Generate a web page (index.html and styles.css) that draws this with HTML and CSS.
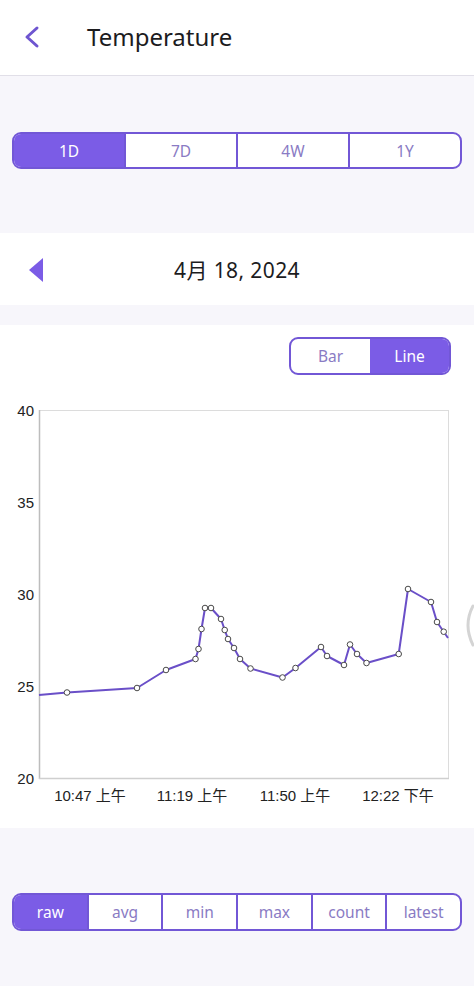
FILE: index.html
```html
<!DOCTYPE html>
<html lang="en">
<head>
  <meta charset="UTF-8">
  <meta name="viewport" content="width=device-width, initial-scale=1.0">
  <title>Temperature</title>
  <link rel="stylesheet" href="styles.css">
</head>

<body>
  <header class="top-bar">
    <button class="back-btn" aria-label="Back">
      <svg width="18" height="24" viewBox="0 0 18 24">
        <path d="M14 3 L4 12 L14 21" fill="none" stroke="#6e55d0" stroke-width="3" stroke-linecap="round" stroke-linejoin="round"/>
      </svg>
    </button>
    <h1>Temperature</h1>
  </header>

  <section class="range-section">
    <div class="segmented range">
      <button class="active">1D</button>
      <button>7D</button>
      <button>4W</button>
      <button>1Y</button>
    </div>
  </section>

  <div class="date-row">
    <button class="prev-btn" aria-label="Previous day">
      <svg width="16" height="26" viewBox="0 0 16 26">
        <path d="M15 1 L15 25 L1 13 Z" fill="#7b5ce6"/>
      </svg>
    </button>
    <div class="date">4月 18, 2024</div>
  </div>

  <section class="chart-card">
    <div class="toggle-row">
      <div class="segmented chart-type">
        <button>Bar</button>
        <button class="active">Line</button>
      </div>
    </div>

    <svg class="chart" width="474" height="453" viewBox="0 375 474 453">
      <line x1="39" y1="410.5" x2="448" y2="410.5" stroke="#dcdcdc" stroke-width="1"/>
      <line x1="448.5" y1="410" x2="448.5" y2="779" stroke="#dcdcdc" stroke-width="1"/>
      <line x1="39.5" y1="410" x2="39.5" y2="779" stroke="#bdbdbd" stroke-width="1.5"/>
      <line x1="39" y1="778.5" x2="449" y2="778.5" stroke="#cfcfcf" stroke-width="1.5"/>

      <g class="y-labels">
        <text x="34" y="416">40</text>
        <text x="34" y="508">35</text>
        <text x="34" y="600">30</text>
        <text x="34" y="692">25</text>
        <text x="34" y="784">20</text>
      </g>

      <g class="x-labels">
        <text x="90" y="801">10:47 上午</text>
        <text x="192" y="801">11:19 上午</text>
        <text x="295" y="801">11:50 上午</text>
        <text x="398" y="801">12:22 下午</text>
      </g>

      <polyline fill="none" stroke="#6a4fc8" stroke-width="2" stroke-linejoin="round"
        points="39,695 67,692.5 137,688 166,670 195.5,659 198.5,649 201.5,629 205,608 211,608 221,619 224.7,630 228,639 234,648 240,659 250.5,668.5 282.5,677.5 295.5,668 321,647 327,656 344,665 350,644.5 357,654 366.5,663 398.7,654 408,589 431,602 437,622 443.7,631.7 448,638"/>

      <g class="dots" fill="#fff" stroke="#4a4a4a" stroke-width="1">
        <circle cx="67" cy="692.5" r="2.8"/>
        <circle cx="137" cy="688" r="2.8"/>
        <circle cx="166" cy="670" r="2.8"/>
        <circle cx="195.5" cy="659" r="2.8"/>
        <circle cx="198.5" cy="649" r="2.8"/>
        <circle cx="201.5" cy="629" r="2.8"/>
        <circle cx="205" cy="608" r="2.8"/>
        <circle cx="211" cy="608" r="2.8"/>
        <circle cx="221" cy="619" r="2.8"/>
        <circle cx="224.7" cy="630" r="2.8"/>
        <circle cx="228" cy="639" r="2.8"/>
        <circle cx="234" cy="648" r="2.8"/>
        <circle cx="240" cy="659" r="2.8"/>
        <circle cx="250.5" cy="668.5" r="2.8"/>
        <circle cx="282.5" cy="677.5" r="2.8"/>
        <circle cx="295.5" cy="668" r="2.8"/>
        <circle cx="321" cy="647" r="2.8"/>
        <circle cx="327" cy="656" r="2.8"/>
        <circle cx="344" cy="665" r="2.8"/>
        <circle cx="350" cy="644.5" r="2.8"/>
        <circle cx="357" cy="654" r="2.8"/>
        <circle cx="366.5" cy="663" r="2.8"/>
        <circle cx="398.7" cy="654" r="2.8"/>
        <circle cx="408" cy="589" r="2.8"/>
        <circle cx="431" cy="602" r="2.8"/>
        <circle cx="437" cy="622" r="2.8"/>
        <circle cx="443.7" cy="631.7" r="2.8"/>
      </g>

      <!-- loading spinner peeking in from the right edge -->
      <path d="M473 606 Q463 625 473 645" fill="none" stroke="#d4d4d4" stroke-width="3" stroke-linecap="round"/>
    </svg>
  </section>

  <section class="agg-section">
    <div class="segmented agg">
      <button class="active">raw</button>
      <button>avg</button>
      <button>min</button>
      <button>max</button>
      <button>count</button>
      <button>latest</button>
    </div>
  </section>
</body>
</html>
```

FILE: styles.css
```css
:root {
  --purple: #7b5ce6;
  --purple-border: #7257d6;
  --purple-text: #8a7bc4;
  --page-bg: #f7f6fb;
  --dark: #1c1c1e;
}

* {
  box-sizing: border-box;
  margin: 0;
  padding: 0;
}

body {
  font-family: 'Noto Sans', 'Noto Sans CJK SC', sans-serif;
  background: var(--page-bg);
  color: var(--dark);
  width: 474px;
  min-height: 986px;
}

button {
  font-family: inherit;
  background: none;
  border: none;
  cursor: pointer;
}

.top-bar {
  height: 76px;
  background: #fff;
  border-bottom: 1px solid #e1dfe8;
  display: flex;
  align-items: center;
  padding-left: 23px;
}

.back-btn {
  display: flex;
  width: 18px;
  height: 24px;
  margin-top: -2px;
}

.top-bar h1 {
  font-size: 24px;
  font-weight: 400;
  margin-left: 46px;
  margin-top: -3px;
}

.range-section {
  padding: 56px 12px 64px;
}

.segmented {
  display: flex;
  border: 2px solid var(--purple-border);
  border-radius: 9px;
  overflow: hidden;
  background: #fff;
}

.segmented button {
  flex: 1;
  color: var(--purple-text);
  font-size: 15.5px;
  border-left: 2px solid var(--purple-border);
}

.segmented button:first-child {
  border-left: none;
}

.segmented button.active {
  background: var(--purple);
  color: #fff;
}

.range {
  height: 37px;
}

.date-row {
  height: 72px;
  background: #fff;
  display: flex;
  align-items: center;
  position: relative;
}

.prev-btn {
  display: flex;
  margin-left: 28px;
  margin-top: 2px;
}

.date {
  position: absolute;
  left: 0;
  right: 0;
  text-align: center;
  font-size: 21px;
  letter-spacing: 0.4px;
  pointer-events: none;
}

.chart-card {
  margin-top: 20px;
  background: #fff;
  height: 503px;
}

.toggle-row {
  display: flex;
  justify-content: flex-end;
  padding: 12px 23px 0 0;
}

.chart-type {
  width: 162px;
  height: 38px;
}

.chart-type button {
  border-left: none;
}

.chart {
  display: block;
}

.y-labels text {
  font-family: 'Liberation Sans', Arial, sans-serif;
  font-size: 15px;
  fill: #222;
  text-anchor: end;
}

.x-labels text {
  font-family: 'Liberation Sans', 'Noto Sans CJK SC', sans-serif;
  font-size: 15px;
  fill: #222;
  text-anchor: middle;
}

.agg-section {
  padding: 65px 12px 55px;
}

.agg {
  height: 38px;
}
```
